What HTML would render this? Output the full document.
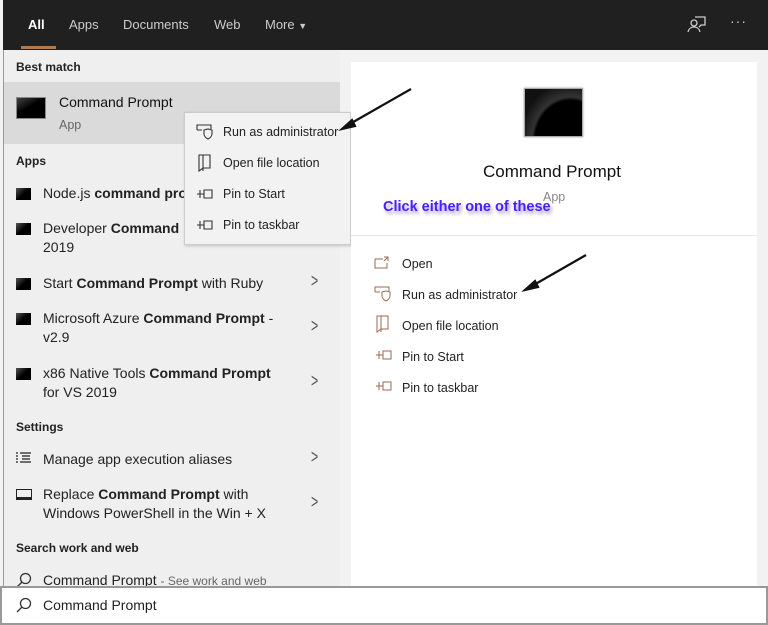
<!DOCTYPE html>
<html><head><meta charset="utf-8"><style>
*{margin:0;padding:0;box-sizing:border-box}
body{width:768px;height:625px;overflow:hidden;background:#f2f2f2;font-family:"Liberation Sans",sans-serif;color:#111;position:relative}
.a{position:absolute;white-space:nowrap}
.top{left:3px;top:0;width:765px;height:50px;background:#202020}
.tab{top:17px;font-size:13px;color:#ccc}
.left{left:3px;top:50px;width:337px;height:540px;background:#efefef;border-left:1px solid #999}
.hd{font-size:12px;font-weight:bold;color:#222}
.it{font-size:14px;color:#222;line-height:19px}
.ic{width:15px;height:12px;background:linear-gradient(135deg,#555,#000 50%);}
.chev{font-size:19px;color:#555;transform:scaleX(.65)}
.card{left:351px;top:62px;width:406px;height:525px;background:#fff}
.mi{font-size:12.5px;color:#222}
.r{font-size:12.5px;color:#222}
</style></head><body>
<div class="a top"></div>
<div class="a" style="left:21px;top:46px;width:35px;height:3px;background:#b07a50"></div>
<div class="a tab" style="left:28px;color:#fff;font-weight:bold">All</div>
<div class="a tab" style="left:69px">Apps</div>
<div class="a tab" style="left:123px">Documents</div>
<div class="a tab" style="left:214px">Web</div>
<div class="a tab" style="left:265px">More <span style="font-size:9px">&#9660;</span></div>
<svg class="a" style="left:687px;top:15px" width="20" height="18" viewBox="0 0 20 18" fill="none" stroke="#ccc" stroke-width="1.3"><path d="M8 2h10v8h-4l-2 2"/><circle cx="7" cy="8" r="3"/><path d="M1 17c1-4 3-5 6-5s5 1 6 5"/></svg>
<div class="a" style="left:730px;top:13px;color:#ccc;font-size:14px;letter-spacing:1px">···</div>

<div class="a left"></div>
<div class="a hd" style="left:16px;top:60px">Best match</div>
<div class="a" style="left:4px;top:82px;width:336px;height:62px;background:#dadada"></div>
<div class="a" style="left:16px;top:97px;width:30px;height:22px;background:linear-gradient(150deg,#444,#000 45%);border:1px solid #888"></div>
<div class="a" style="left:59px;top:94px;font-size:14px;color:#111">Command Prompt</div>
<div class="a" style="left:59px;top:118px;font-size:12.5px;color:#666">App</div>
<div class="a hd" style="left:16px;top:154px">Apps</div>
<div class="a ic" style="left:16px;top:188px"></div><div class="a it" style="left:43px;top:184px">Node.js <b>command pro</b></div>
<div class="a ic" style="left:16px;top:223px"></div><div class="a it" style="left:43px;top:219px">Developer <b>Command</b><br>2019</div>
<div class="a ic" style="left:16px;top:278px"></div><div class="a it" style="left:43px;top:274px">Start <b>Command Prompt</b> with Ruby</div><div class="a chev" style="left:309px;top:271px">&gt;</div>
<div class="a ic" style="left:16px;top:313px"></div><div class="a it" style="left:43px;top:309px">Microsoft Azure <b>Command Prompt</b> -<br>v2.9</div><div class="a chev" style="left:309px;top:316px">&gt;</div>
<div class="a ic" style="left:16px;top:368px"></div><div class="a it" style="left:43px;top:364px"><span>x86 Native Tools </span><b>Command Prompt</b><br>for VS 2019</div><div class="a chev" style="left:309px;top:371px">&gt;</div>
<div class="a hd" style="left:16px;top:420px">Settings</div>
<svg class="a" style="left:16px;top:451px" width="16" height="14" stroke="#222" stroke-width="1.2"><path d="M0 2h2M0 5h2M0 8h2M0 11h2M4 2h11M6 5h8M6 8h8M4 11h11"/></svg>
<div class="a it" style="left:43px;top:450px">Manage app execution aliases</div><div class="a chev" style="left:309px;top:447px">&gt;</div>
<div class="a" style="left:16px;top:489px;width:16px;height:11px;border:1px solid #222;border-bottom-width:3px"></div>
<div class="a it" style="left:43px;top:485px">Replace <b>Command Prompt</b> with<br>Windows PowerShell in the Win + X</div><div class="a chev" style="left:309px;top:492px">&gt;</div>
<div class="a hd" style="left:16px;top:541px">Search work and web</div>
<svg class="a" style="left:16px;top:572px" width="16" height="16" fill="none" stroke="#333" stroke-width="1.3"><circle cx="9.5" cy="6.5" r="5"/><path d="M6 10L1 15"/></svg>
<div class="a it" style="left:43px;top:571px">Command Prompt <span style="font-size:12px;color:#666">- See work and web</span></div>

<div class="a" style="left:184px;top:112px;width:167px;height:133px;background:#f2f2f2;border:1px solid #ccc;box-shadow:1px 1px 3px rgba(0,0,0,.2)"></div>
<svg class="a" style="left:196px;top:124px" width="18" height="16" fill="none" stroke="#333" stroke-width="1.1"><path d="M1 6V1h14v4M1 6h5"/><path d="M8 6l4-1 4 1v4c0 2-2 4-4 5-2-1-4-3-4-5z"/></svg>
<div class="a mi" style="left:223px;top:125px">Run as administrator</div>
<svg class="a" style="left:198px;top:154px" width="14" height="18" fill="none" stroke="#333" stroke-width="1.1"><path d="M1 1h11v13H5l-4 3zM5 1v16"/></svg>
<div class="a mi" style="left:223px;top:156px">Open file location</div>
<svg class="a" style="left:196px;top:189px" width="18" height="10" fill="none" stroke="#333" stroke-width="1.1"><path d="M1 5h7M4 1v8M8 1h8v8H8z"/></svg>
<div class="a mi" style="left:223px;top:187px">Pin to Start</div>
<svg class="a" style="left:196px;top:220px" width="18" height="10" fill="none" stroke="#333" stroke-width="1.1"><path d="M1 5h7M4 1v8M8 1h8v8H8z"/></svg>
<div class="a mi" style="left:223px;top:218px">Pin to taskbar</div>

<div class="a card"></div>
<div class="a" style="left:524px;top:88px;width:59px;height:49px;background:radial-gradient(ellipse at 80% 110%,#000 55%,#333 60%,#111 80%);border:1px solid #aaa;box-shadow:0 0 2px #999"></div>
<div class="a" style="left:483px;top:162px;font-size:17px;color:#111">Command Prompt</div>
<div class="a" style="left:543px;top:190px;font-size:12.5px;color:#888">App</div>
<div class="a" style="left:383px;top:199px;font-size:14.5px;font-weight:bold;color:#4a1fff;text-shadow:2px 3px 3px rgba(80,40,160,.45)">Click either one of these</div>
<div class="a" style="left:351px;top:235px;width:406px;height:1px;background:#e6e6e6"></div>
<svg class="a" style="left:374px;top:256px" width="16" height="14" fill="none" stroke="#9a6a50" stroke-width="1"><path d="M9 3H1v9h12V7M10 1h4v4M14 1l-4 4"/></svg>
<div class="a r" style="left:402px;top:257px">Open</div>
<svg class="a" style="left:374px;top:286px" width="18" height="16" fill="none" stroke="#9a6a50" stroke-width="1"><path d="M1 6V1h14v4M1 6h5"/><path d="M8 6l4-1 4 1v4c0 2-2 4-4 5-2-1-4-3-4-5z"/></svg>
<div class="a r" style="left:402px;top:288px">Run as administrator</div>
<svg class="a" style="left:376px;top:315px" width="14" height="18" fill="none" stroke="#9a6a50" stroke-width="1"><path d="M1 1h11v13H5l-4 3zM5 1v16"/></svg>
<div class="a r" style="left:402px;top:319px">Open file location</div>
<svg class="a" style="left:375px;top:350px" width="18" height="10" fill="none" stroke="#9a6a50" stroke-width="1"><path d="M1 5h7M4 1v8M8 1h8v8H8z"/></svg>
<div class="a r" style="left:402px;top:350px">Pin to Start</div>
<svg class="a" style="left:375px;top:381px" width="18" height="10" fill="none" stroke="#9a6a50" stroke-width="1"><path d="M1 5h7M4 1v8M8 1h8v8H8z"/></svg>
<div class="a r" style="left:402px;top:381px">Pin to taskbar</div>

<svg class="a" style="left:0;top:0" width="768" height="625"><g stroke="#111" stroke-width="2.2" fill="#111"><line x1="411" y1="89" x2="348" y2="125"/><path d="M342 129l10-9 3 6z"/><line x1="586" y1="255" x2="532" y2="286"/><path d="M525 290l10-9 3 6z"/></g></svg>

<div class="a" style="left:0;top:586px;width:768px;height:39px;background:#fff;border:2px solid #999"></div>
<svg class="a" style="left:16px;top:597px" width="16" height="16" fill="none" stroke="#333" stroke-width="1.3"><circle cx="9.5" cy="6.5" r="5"/><path d="M6 10L1 15"/></svg>
<div class="a" style="left:43px;top:597px;font-size:14px;color:#222">Command Prompt</div>
</body></html>
